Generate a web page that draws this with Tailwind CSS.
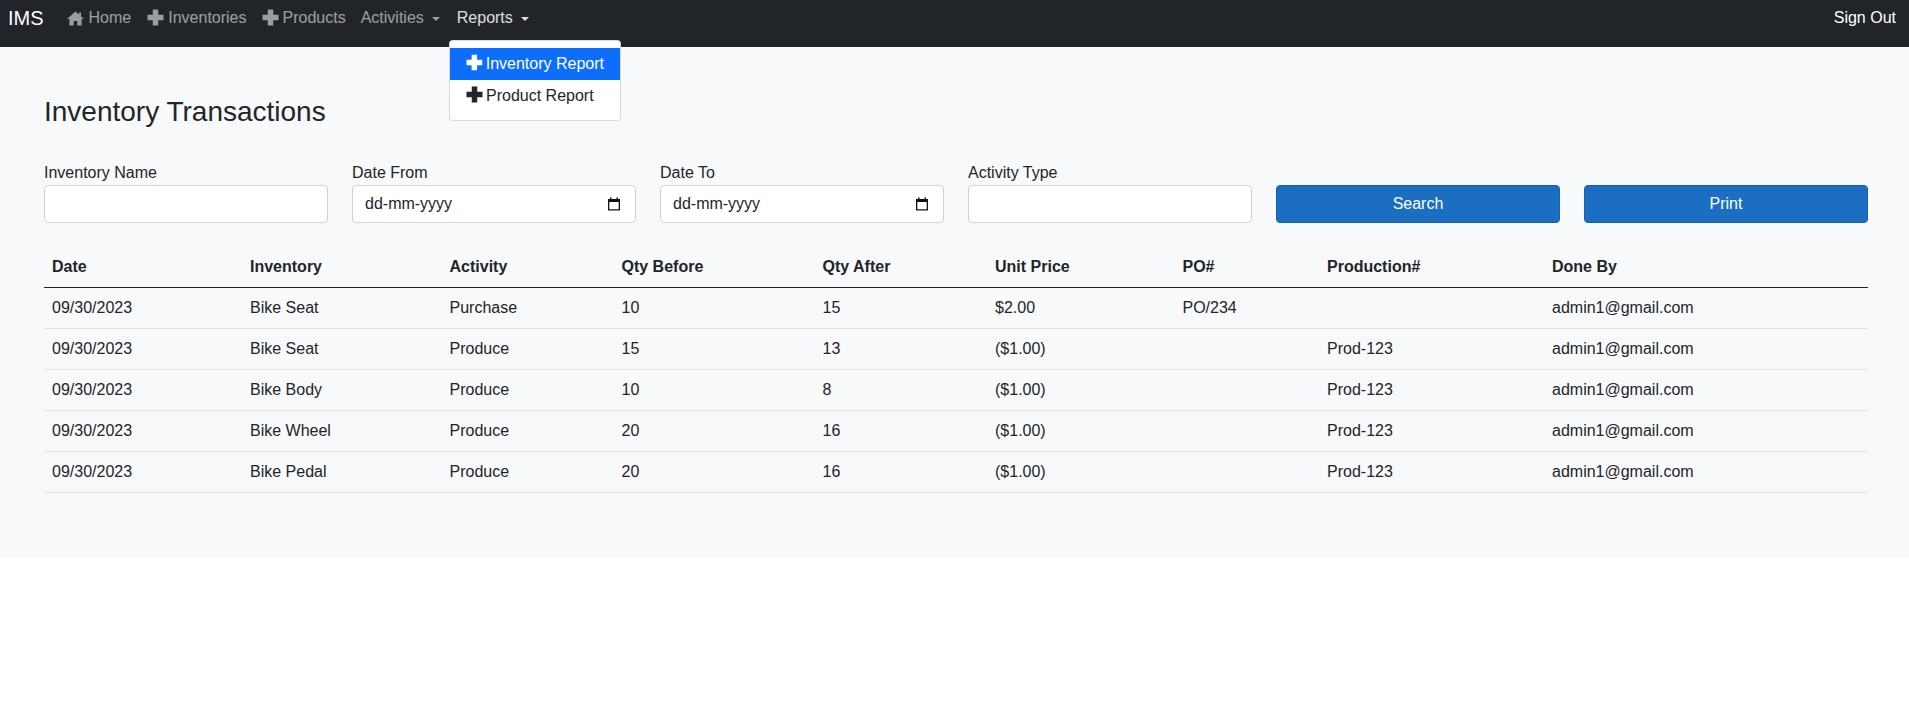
<!DOCTYPE html>
<html lang="en">
<head>
    <meta charset="UTF-8">
    <meta name="viewport" content="width=device-width, initial-scale=1.0">
    <title>IMS</title>
    <script src="https://cdn.jsdelivr.net/npm/@tailwindcss/browser@4"></script>
</head>
<body class="bg-white text-[#212529] font-['Liberation_Sans',Arial,sans-serif] text-base">
    <!-- NAVBAR -->
    <header class="h-[47px] bg-[#212529] flex justify-between items-start pt-[6px] px-2 relative">
        <nav class="flex items-center leading-6">
            <a href="#" class="text-xl leading-6 text-white mr-[23px]">IMS</a>
            <ul class="flex items-center text-white/55">
                <li class="flex items-center pr-[16px]">
                    <svg class="w-[17px] h-[15px] mr-[5px]" viewBox="0 0 17 15" fill="currentColor"><path d="M8.5 0.5 L12 3.6 V1.5 H14 V5.4 L17 8 H14.6 V14.5 H10.3 V10 H6.7 V14.5 H2.4 V8 H0 Z"/></svg>
                    <a href="#">Home</a>
                </li>
                <li class="flex items-center pr-[15px]">
                    <svg class="w-[17px] h-[17px] mr-[4px] mb-[2px]" viewBox="0 0 17 17" fill="currentColor"><path d="M5.75 0.5 H11.25 V5.75 H16.5 V11.25 H11.25 V16.5 H5.75 V11.25 H0.5 V5.75 H5.75 Z"/></svg>
                    <a href="#">Inventories</a>
                </li>
                <li class="flex items-center pr-[15px]">
                    <svg class="w-[17px] h-[17px] mr-[4px] mb-[2px]" viewBox="0 0 17 17" fill="currentColor"><path d="M5.75 0.5 H11.25 V5.75 H16.5 V11.25 H11.25 V16.5 H5.75 V11.25 H0.5 V5.75 H5.75 Z"/></svg>
                    <a href="#">Products</a>
                </li>
                <li class="flex items-center pr-[17px]">
                    <a href="#">Activities</a>
                    <span class="ml-[8px] mt-[1px] border-x-[4.8px] border-t-[4.8px] border-x-transparent border-t-current"></span>
                </li>
                <li class="flex items-center text-white/85">
                    <a href="#">Reports</a>
                    <span class="ml-[8px] mt-[1px] border-x-[4.8px] border-t-[4.8px] border-x-transparent border-t-current"></span>
                </li>
            </ul>
        </nav>
        <a href="#" class="text-white leading-6 pr-[5px]">Sign Out</a>

        <!-- REPORTS DROPDOWN -->
        <div class="absolute left-[449px] top-[40px] w-[172px] h-[81px] bg-white border border-black/15 rounded-[4px] py-[7px] z-10">
            <a href="#" class="flex items-center h-[32px] px-4 bg-[#0d6efd] text-white whitespace-nowrap">
                <svg class="w-[17px] h-[17px] mr-[3px] mb-[3px]" viewBox="0 0 17 17" fill="currentColor"><path d="M5.75 0.5 H11.25 V5.75 H16.5 V11.25 H11.25 V16.5 H5.75 V11.25 H0.5 V5.75 H5.75 Z"/></svg>
                <span>Inventory Report</span>
            </a>
            <a href="#" class="flex items-center h-[32px] px-4 text-[#212529] whitespace-nowrap">
                <svg class="w-[17px] h-[17px] mr-[3px] mb-[3px]" viewBox="0 0 17 17" fill="currentColor"><path d="M5.75 0.5 H11.25 V5.75 H16.5 V11.25 H11.25 V16.5 H5.75 V11.25 H0.5 V5.75 H5.75 Z"/></svg>
                <span>Product Report</span>
            </a>
        </div>
    </header>

    <!-- MAIN -->
    <main class="bg-[#f8f9fa] pl-[44px] pr-[41px] pt-12 pb-12 h-[510px]">
        <h3 class="text-[28px] leading-[34px] mb-[32px]">Inventory Transactions</h3>

        <div class="grid grid-cols-6 gap-x-6 mb-[23px]">
            <div>
                <label class="block leading-6">Inventory Name</label>
                <input type="text" class="block w-full h-[38px] bg-white border border-[#ced4da] rounded-[4px] px-3">
            </div>
            <div>
                <label class="block leading-6">Date From</label>
                <div class="flex justify-between items-center h-[38px] bg-white border border-[#ced4da] rounded-[4px] pl-3 pr-[14px]">
                    <span>dd-mm-yyyy</span>
                    <svg class="w-[14px] h-[14px]" viewBox="0 0 14 14" fill="#111"><path d="M3 0.5 H4.5 V2 H9.5 V0.5 H11 V2 H13 V13.5 H1 V2 H3 Z M2.3 5 V12.2 H11.7 V5 Z"/></svg>
                </div>
            </div>
            <div>
                <label class="block leading-6">Date To</label>
                <div class="flex justify-between items-center h-[38px] bg-white border border-[#ced4da] rounded-[4px] pl-3 pr-[14px]">
                    <span>dd-mm-yyyy</span>
                    <svg class="w-[14px] h-[14px]" viewBox="0 0 14 14" fill="#111"><path d="M3 0.5 H4.5 V2 H9.5 V0.5 H11 V2 H13 V13.5 H1 V2 H3 Z M2.3 5 V12.2 H11.7 V5 Z"/></svg>
                </div>
            </div>
            <div>
                <label class="block leading-6">Activity Type</label>
                <input type="text" class="block w-full h-[38px] bg-white border border-[#ced4da] rounded-[4px] px-3">
            </div>
            <div class="pt-6">
                <button class="w-full h-[38px] bg-[#1b6ec2] border border-[#1861ac] rounded-[4px] text-white">Search</button>
            </div>
            <div class="pt-6">
                <button class="w-full h-[38px] bg-[#1b6ec2] border border-[#1861ac] rounded-[4px] text-white">Print</button>
            </div>
        </div>

        <table class="w-full table-fixed border-collapse text-left">
            <thead>
                <tr class="h-[41px] border-b-[1.5px] border-[#212529]">
                    <th class="w-[198px] px-2 pt-[2px] font-bold">Date</th>
                    <th class="w-[199.5px] px-2 pt-[2px] font-bold">Inventory</th>
                    <th class="w-[172px] px-2 pt-[2px] font-bold">Activity</th>
                    <th class="w-[201px] px-2 pt-[2px] font-bold">Qty Before</th>
                    <th class="w-[172.5px] px-2 pt-[2px] font-bold">Qty After</th>
                    <th class="w-[187.5px] px-2 pt-[2px] font-bold">Unit Price</th>
                    <th class="w-[144.5px] px-2 pt-[2px] font-bold">PO#</th>
                    <th class="w-[225px] px-2 pt-[2px] font-bold">Production#</th>
                    <th class="px-2 pt-[2px] font-bold">Done By</th>
                </tr>
            </thead>
            <tbody id="rows">
                <tr class="h-[41px] border-b border-[#dee2e6]">
                    <td class="px-2">09/30/2023</td><td class="px-2">Bike Seat</td><td class="px-2">Purchase</td><td class="px-2">10</td><td class="px-2">15</td><td class="px-2">$2.00</td><td class="px-2">PO/234</td><td class="px-2"></td><td class="px-2">admin1@gmail.com</td>
                </tr>
                <tr class="h-[41px] border-b border-[#dee2e6]">
                    <td class="px-2">09/30/2023</td><td class="px-2">Bike Seat</td><td class="px-2">Produce</td><td class="px-2">15</td><td class="px-2">13</td><td class="px-2">($1.00)</td><td class="px-2"></td><td class="px-2">Prod-123</td><td class="px-2">admin1@gmail.com</td>
                </tr>
                <tr class="h-[41px] border-b border-[#dee2e6]">
                    <td class="px-2">09/30/2023</td><td class="px-2">Bike Body</td><td class="px-2">Produce</td><td class="px-2">10</td><td class="px-2">8</td><td class="px-2">($1.00)</td><td class="px-2"></td><td class="px-2">Prod-123</td><td class="px-2">admin1@gmail.com</td>
                </tr>
                <tr class="h-[41px] border-b border-[#dee2e6]">
                    <td class="px-2">09/30/2023</td><td class="px-2">Bike Wheel</td><td class="px-2">Produce</td><td class="px-2">20</td><td class="px-2">16</td><td class="px-2">($1.00)</td><td class="px-2"></td><td class="px-2">Prod-123</td><td class="px-2">admin1@gmail.com</td>
                </tr>
                <tr class="h-[41px] border-b border-[#dee2e6]">
                    <td class="px-2">09/30/2023</td><td class="px-2">Bike Pedal</td><td class="px-2">Produce</td><td class="px-2">20</td><td class="px-2">16</td><td class="px-2">($1.00)</td><td class="px-2"></td><td class="px-2">Prod-123</td><td class="px-2">admin1@gmail.com</td>
                </tr>
            </tbody>
        </table>
    </main>
</body>
</html>
